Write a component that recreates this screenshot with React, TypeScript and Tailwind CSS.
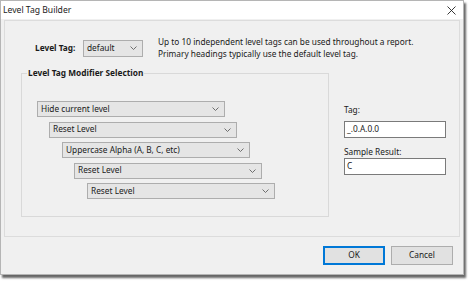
import React from "react";

const Chevron = () => (
  <svg width="7" height="4" viewBox="0 0 7 4" className="shrink-0">
    <path d="M0.5 0.5 L3.5 3.5 L6.5 0.5" fill="none" stroke="#606060" strokeWidth="0.9" />
  </svg>
);

function Combo({ label, className = "" }: { label: string; className?: string }) {
  return (
    <div
      className={`h-[16px] flex items-center justify-between bg-[#e5e5e5] border border-[#adadad] pl-[3px] pr-[5px] ${className}`}
    >
      <span className="leading-none">{label}</span>
      <Chevron />
    </div>
  );
}

const modifiers = [
  { label: "Hide current level", indent: "ml-0" },
  { label: "Reset Level", indent: "ml-[12px]" },
  { label: "Uppercase Alpha (A, B, C, etc)", indent: "ml-[25px]" },
  { label: "Reset Level", indent: "ml-[37px]" },
  { label: "Reset Level", indent: "ml-[50px]" },
];

export default function App() {
  return (
    <div className="w-[474px] h-[285px] bg-white font-['Noto_Sans',sans-serif] text-[8.3px] text-[#1a1a1a]">
      <div className="w-[464px] h-[275px] flex flex-col bg-[#f0f0f0] border border-[#b5b5b5] shadow-[2px_3px_2px_rgba(0,0,0,0.6)]">
        {/* title bar */}
        <div className="h-[18px] shrink-0 bg-white flex items-center justify-between pl-[2px] pr-[7px]">
          <span className="text-[8.6px]">Level Tag Builder</span>
          <svg width="9" height="9" viewBox="0 0 9 9">
            <path d="M0.5 0.5 L8.5 8.5 M8.5 0.5 L0.5 8.5" stroke="#222" strokeWidth="0.9" />
          </svg>
        </div>

        {/* main panel */}
        <div className="px-[3px] pt-[1px]">
          <div className="h-[217px] border border-[#dcdcdc] pt-[15px] pl-[16px]">
            <div className="h-[24px] flex items-center">
              <span className="ml-[14px] w-[48px] font-bold">Level Tag:</span>
              <Combo label="default" className="w-[60px] h-[17px]" />
              <div className="ml-[15px] leading-[12px]">
                <div>Up to 10 independent level tags can be used throughout a report.</div>
                <div>Primary headings typically use the default level tag.</div>
              </div>
            </div>

            <div className="mt-[13px] flex items-start">
              <div className="relative w-[308px] h-[144px] border border-[#d9d9d9] pt-[27px] pl-[15px] flex flex-col gap-[4.5px]">
                <span className="absolute -top-[7px] left-[5px] bg-[#f0f0f0] px-[1px] font-bold leading-[12px]">
                  Level Tag Modifier Selection
                </span>
                {modifiers.map((m, i) => (
                  <Combo key={i} label={m.label} className={`w-[188px] ${m.indent}`} />
                ))}
              </div>

              <div className="ml-[15px] w-[102px] pt-[31px] flex flex-col">
                <span className="leading-[12px]">Tag:</span>
                <div className="mt-[5px] h-[17px] bg-white border border-[#7a7a7a] flex items-center pl-[2px]">
                  _.0.A.0.0
                </div>
                <span className="mt-[8px] leading-[12px]">Sample Result:</span>
                <div className="h-[17px] bg-white border border-[#7a7a7a] flex items-center pl-[2px]">C</div>
              </div>
            </div>
          </div>
        </div>

        {/* footer */}
        <div className="flex justify-end gap-[6px] pr-[10px] mt-[9px]">
          <button className="w-[62px] h-[19px] bg-[#e1e1e1] border border-[#0078d7] shadow-[inset_0_0_0_1px_#0078d7]">
            OK
          </button>
          <button className="w-[62px] h-[19px] bg-[#e1e1e1] border border-[#adadad]">Cancel</button>
        </div>
      </div>
    </div>
  );
}
